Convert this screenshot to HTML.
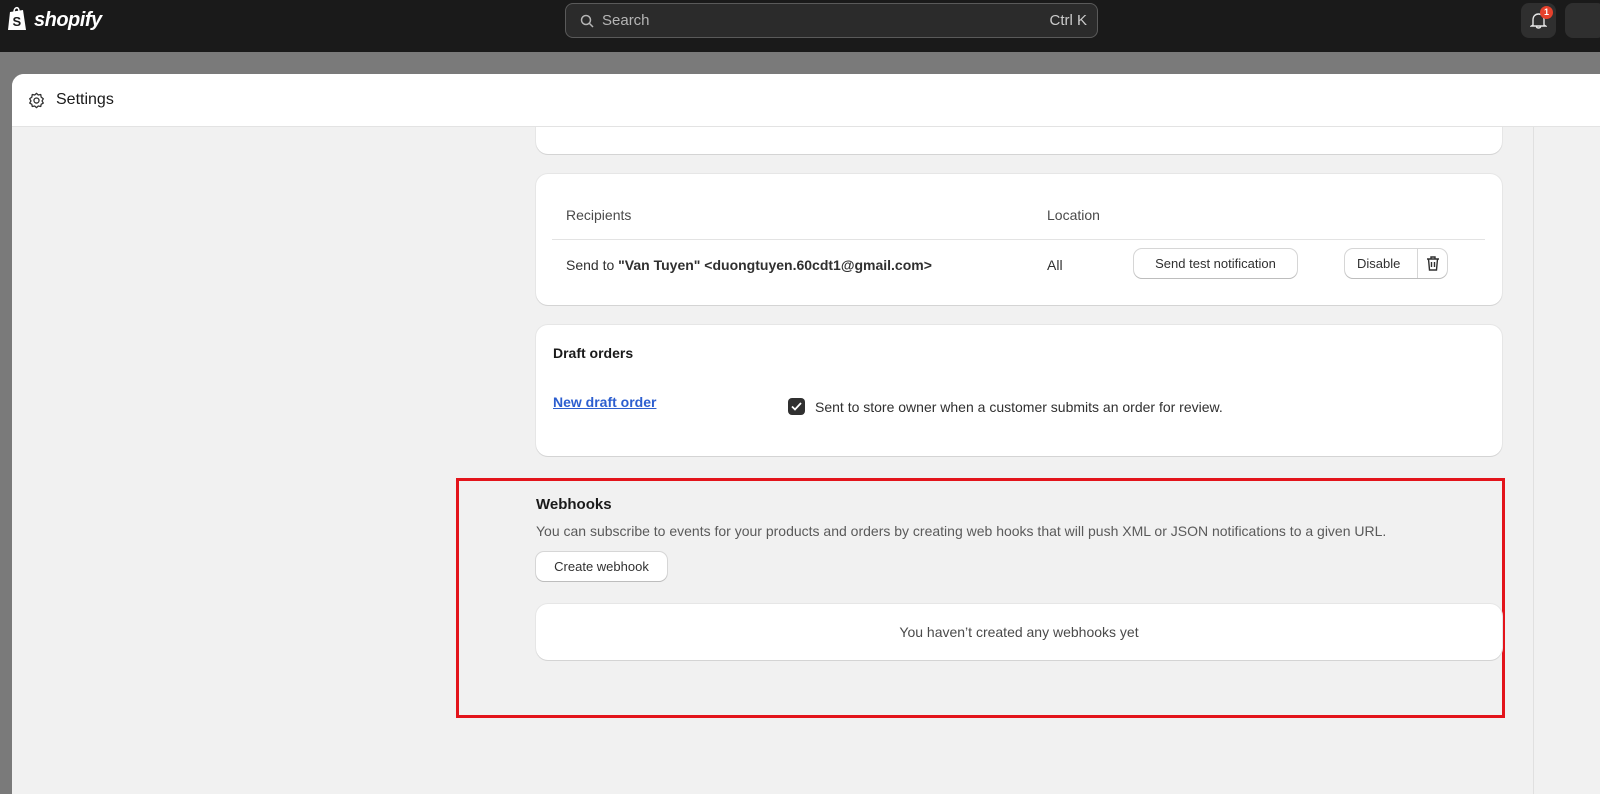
<!DOCTYPE html>
<html><head><style>
*{box-sizing:border-box;margin:0;padding:0}
body{width:1600px;height:784px;overflow:hidden;background:#7a7a7a;font-family:"Liberation Sans",sans-serif;color:#303030;position:relative}
.top{position:absolute;left:0;top:0;width:1600px;height:52px;background:#1a1a1a;z-index:5}
.search{position:absolute;left:565px;top:3px;width:533px;height:35px;border:1px solid #5a5a5a;border-radius:8px;background:#2b2b2b;color:#b5b5b5;font-size:15px}
.panel{position:absolute;left:12px;top:74px;width:1600px;height:720px;background:#f1f1f1;border-radius:12px 0 0 0;overflow:hidden}
.hdr{position:absolute;left:12px;top:74px;width:1600px;height:53px;background:#fff;border-bottom:1px solid #e3e3e3;border-radius:12px 0 0 0;font-size:16px;color:#1a1a1a;z-index:4}
.card{position:absolute;background:#fff;border-radius:12px;box-shadow:0 1px 0 #d4d4d4,0 0 0 1px #e6e6e6}
.btn{position:absolute;background:#fff;border-radius:8px;box-shadow:0 1px 0 #bdbdbd,0 0 0 1px #d6d6d6;font-size:13px;color:#303030;text-align:center;line-height:29px}
.t{position:absolute;font-size:14px;white-space:nowrap}
</style></head><body>
<div class="top">
 <svg style="position:absolute;left:7px;top:6px" width="22" height="26" viewBox="0 0 22 26"><path d="M3 6 L16 4 L19 24 L1 24 Z" fill="#fff"/><path d="M7 6 C7 1 12 0 12 5" stroke="#fff" stroke-width="1.6" fill="none"/><text x="5.5" y="20" font-size="13" font-weight="bold" fill="#1a1a1a" font-family="Liberation Sans">S</text></svg>
 <div style="position:absolute;left:34px;top:9px;color:#fff;font-size:20px;font-weight:bold;font-style:italic;letter-spacing:-0.5px">shopify</div>
 <div class="search">
  <svg style="position:absolute;left:14px;top:10px" width="14" height="14" viewBox="0 0 14 14"><circle cx="6" cy="6" r="4.5" stroke="#b5b5b5" stroke-width="1.5" fill="none"/><path d="M9.5 9.5 L13 13" stroke="#b5b5b5" stroke-width="1.5"/></svg>
  <span style="position:absolute;left:36px;top:8px">Search</span>
  <span style="position:absolute;right:10px;top:8px;color:#ccc">Ctrl K</span>
 </div>
 <div style="position:absolute;left:1521px;top:3px;width:35px;height:35px;background:#2f2f2f;border-radius:8px">
  <svg style="position:absolute;left:9px;top:9px" width="17" height="18" viewBox="0 0 17 18"><path d="M3 13 L3 8 C3 4 5.5 2 8.5 2 C11.5 2 14 4 14 8 L14 13 L15.5 14 L1.5 14 Z M6.5 14.5 C6.5 16.5 10.5 16.5 10.5 14.5" stroke="#e6e6e6" stroke-width="1.4" fill="none"/></svg>
  <div style="position:absolute;left:19px;top:3px;width:13px;height:13px;border-radius:50%;background:#e5412c;color:#fff;font-size:9px;font-weight:bold;text-align:center;line-height:13px">1</div>
 </div>
 <div style="position:absolute;left:1565px;top:3px;width:40px;height:35px;background:#2f2f2f;border-radius:8px"></div>
</div>
<div class="panel">
 <div style="position:absolute;left:1521px;top:53px;width:1px;height:700px;background:#e0e0e0"></div>
</div>
<div class="hdr">
  <svg style="position:absolute;left:16px;top:18px" width="17" height="17" viewBox="0 0 20 20"><path d="M10 1.5 L12 3.5 L15 3 L15.5 6 L18 8 L16.5 10.5 L18 13 L15.5 14.5 L15 17 L12 16.5 L10 18.5 L8 16.5 L5 17 L4.5 14.5 L2 13 L3.5 10.5 L2 8 L4.5 6 L5 3 L8 3.5 Z" stroke="#303030" stroke-width="1.5" fill="none" stroke-linejoin="round"/><circle cx="10" cy="10" r="3" stroke="#303030" stroke-width="1.5" fill="none"/></svg>
  <span style="position:absolute;left:44px;top:17px">Settings</span>
</div>
<div class="card" style="left:536px;top:110px;width:966px;height:44px;border-radius:0 0 12px 12px"></div>
<div class="card" style="left:536px;top:174px;width:966px;height:131px">
 <div class="t" style="left:30px;top:33px;color:#4a4a4a">Recipients</div>
 <div class="t" style="left:511px;top:33px;color:#4a4a4a">Location</div>
 <div style="position:absolute;left:16px;top:65px;width:933px;height:1px;background:#e3e3e3"></div>
 <div class="t" style="left:30px;top:83px">Send to <b>"Van Tuyen" &lt;duongtuyen.60cdt1@gmail.com&gt;</b></div>
 <div class="t" style="left:511px;top:83px">All</div>
 <div class="btn" style="left:598px;top:75px;width:163px">Send test notification</div>
 <div class="btn" style="left:809px;top:75px;width:102px;text-align:left;padding-left:12px">Disable<div style="position:absolute;left:72px;top:0;width:1px;height:29px;background:#d6d6d6"></div>
  <svg style="position:absolute;left:80px;top:6px" width="16" height="17" viewBox="0 0 16 17"><path d="M2 4 L14 4 M6 4 L6 2 L10 2 L10 4 M3.5 4 L4.5 15 L11.5 15 L12.5 4 M6.5 7 L6.5 12 M9.5 7 L9.5 12" stroke="#303030" stroke-width="1.4" fill="none"/></svg></div>
</div>
<div class="card" style="left:536px;top:325px;width:966px;height:131px">
 <div class="t" style="left:17px;top:20px;font-weight:bold;color:#1a1a1a">Draft orders</div>
 <div class="t" style="left:17px;top:69px;font-weight:bold;color:#2c5ecf;text-decoration:underline">New draft order</div>
 <div style="position:absolute;left:252px;top:73px;width:17px;height:17px;background:#303030;border-radius:4px"><svg width="17" height="17" viewBox="0 0 17 17"><path d="M4 8.5 L7 11.5 L13 5" stroke="#fff" stroke-width="1.8" fill="none"/></svg></div>
 <div class="t" style="left:279px;top:74px">Sent to store owner when a customer submits an order for review.</div>
</div>
<div style="position:absolute;left:456px;top:478px;width:1049px;height:240px;border:3px solid #e3141b"></div>
<div class="t" style="left:536px;top:496px;font-weight:bold;font-size:15px;color:#1a1a1a">Webhooks</div>
<div class="t" style="left:536px;top:523px;color:#5a5a5a">You can subscribe to events for your products and orders by creating web hooks that will push XML or JSON notifications to a given URL.</div>
<div class="btn" style="left:536px;top:552px;width:131px">Create webhook</div>
<div class="card" style="left:536px;top:604px;width:966px;height:56px"><div class="t" style="left:0;width:966px;text-align:center;top:20px;color:#4a4a4a">You haven’t created any webhooks yet</div></div>
</body></html>
